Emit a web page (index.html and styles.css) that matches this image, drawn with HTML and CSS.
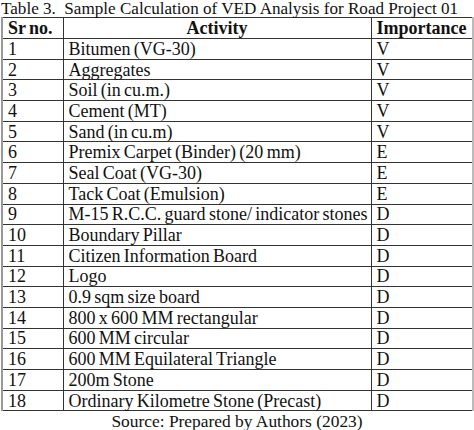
FILE: index.html
```html
<!DOCTYPE html>
<html>
<head>
<meta charset="utf-8">
<link rel="stylesheet" href="styles.css">
</head>
<body>
<div class="page">
  <div class="title">Table 3.&nbsp; Sample Calculation of VED Analysis for Road Project 01</div>
  <table class="ved">
    <colgroup><col class="c1"><col class="c2"><col class="c3"></colgroup>
    <thead>
      <tr><th class="sr">Sr no.</th><th class="act">Activity</th><th class="imp">Importance</th></tr>
    </thead>
    <tbody>
      <tr><td>1</td><td>Bitumen (VG-30)</td><td>V</td></tr>
      <tr><td>2</td><td>Aggregates</td><td>V</td></tr>
      <tr><td>3</td><td>Soil (in cu.m.)</td><td>V</td></tr>
      <tr><td>4</td><td>Cement (MT)</td><td>V</td></tr>
      <tr><td>5</td><td>Sand (in cu.m)</td><td>V</td></tr>
      <tr><td>6</td><td>Premix Carpet (Binder) (20 mm)</td><td>E</td></tr>
      <tr><td>7</td><td>Seal Coat (VG-30)</td><td>E</td></tr>
      <tr><td>8</td><td>Tack Coat (Emulsion)</td><td>E</td></tr>
      <tr><td>9</td><td>M-15 R.C.C. guard stone/ indicator stones</td><td>D</td></tr>
      <tr><td>10</td><td>Boundary Pillar</td><td>D</td></tr>
      <tr><td>11</td><td>Citizen Information Board</td><td>D</td></tr>
      <tr><td>12</td><td>Logo</td><td>D</td></tr>
      <tr><td>13</td><td>0.9 sqm size board</td><td>D</td></tr>
      <tr><td>14</td><td>800 x 600 MM rectangular</td><td>D</td></tr>
      <tr><td>15</td><td>600 MM circular</td><td>D</td></tr>
      <tr><td>16</td><td>600 MM Equilateral Triangle</td><td>D</td></tr>
      <tr><td>17</td><td>200m Stone</td><td>D</td></tr>
      <tr><td>18</td><td>Ordinary Kilometre Stone (Precast)</td><td>D</td></tr>
    </tbody>
  </table>
  <div class="source">Source: Prepared by Authors (2023)</div>
</div>
</body>
</html>
```
FILE: styles.css
```css
html, body {
  margin: 0;
  padding: 0;
  background: #fff;
}
.page {
  width: 474px;
  font-family: "Liberation Serif", "Times New Roman", serif;
  color: #111;
}
.title {
  font-size: 17.1px;
  line-height: 17px;
  height: 17px;
  white-space: nowrap;
  padding-left: 1px;
}
.ved {
  border-collapse: collapse;
  margin-left: 1px;
  width: 471px;
  table-layout: fixed;
}
.c1 { width: 61px; }
.c2 { width: 308px; }
.c3 { width: 102px; }
.ved th, .ved td {
  border: 1px solid #333;
  height: 20.7px;
  padding: 0 0 0 5px;
  font-size: 18px;
  line-height: 18px;
  text-align: left;
  white-space: nowrap;
  box-sizing: border-box;
  word-spacing: -1.2px;
}
.ved tr > *:first-child { border-left: 2px solid #999; }
.ved tr > *:last-child { border-right: 2px solid #bbb; }
.ved th {
  font-weight: bold;
  height: 21px;
}
.ved th.act { text-align: center; padding: 0; }
.source {
  text-align: center;
  font-size: 17.4px;
  line-height: 17px;
  margin-top: 2px;
}
```
